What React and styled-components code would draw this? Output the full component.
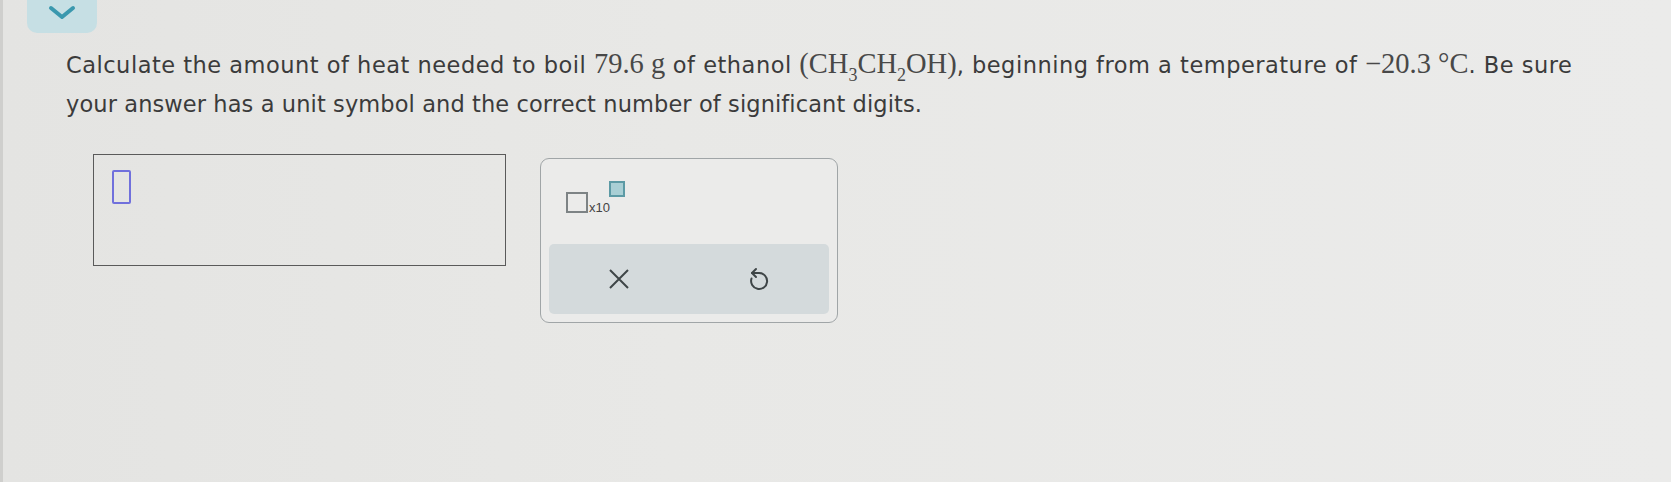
import React from "react";
import styled, { createGlobalStyle } from "styled-components";

const GlobalStyle = createGlobalStyle`
  html, body {
    margin: 0;
    padding: 0;
    background: #e7e7e5;
  }
  body {
    font-family: "DejaVu Sans", Verdana, sans-serif;
    color: #3b3b3b;
  }
`;

const Page = styled.div`
  width: 1671px;
  height: 482px;
  box-sizing: border-box;
  border-left: 3px solid #cfcfcd;
  background: linear-gradient(90deg, #e4e4e2 0%, #e8e8e6 40%, #ebebea 100%);
  overflow: hidden;
`;

const TabRow = styled.div`
  padding-left: 24px;
`;

const CollapseTab = styled.div`
  width: 70px;
  height: 33px;
  background: #c6dfe4;
  border-radius: 0 0 10px 10px;
  display: flex;
  align-items: flex-start;
  justify-content: center;
  padding-top: 5px;
  box-sizing: border-box;
`;

const Question = styled.div`
  margin: 11px 0 0 63px;
  font-size: 22.5px;
  line-height: 40px;
`;

const Line = styled.div`
  white-space: nowrap;
  height: 40px;
  letter-spacing: ${(p) => p.$spacing || 0}px;
`;

const Math = styled.span`
  font-family: "Liberation Serif", "Times New Roman", serif;
  font-size: 28.5px;
  letter-spacing: 0;
  color: #484848;
  sub {
    font-size: 18px;
    vertical-align: -8px;
    line-height: 0;
  }
`;

const AnswerRow = styled.div`
  display: flex;
  align-items: flex-start;
  gap: 34px;
  margin: 30px 0 0 90px;
`;

const AnswerBox = styled.div`
  width: 413px;
  height: 112px;
  box-sizing: border-box;
  border: 1.5px solid #5a5a5a;
  padding: 15px 0 0 18px;
`;

const Cursor = styled.div`
  width: 19px;
  height: 34px;
  box-sizing: border-box;
  border: 2px solid #7070dc;
  border-radius: 2px;
`;

const Keypad = styled.div`
  margin-top: 4px;
  width: 298px;
  height: 165px;
  box-sizing: border-box;
  border: 1.5px solid #a0a5a7;
  border-radius: 9px;
  background: #ebebea;
  padding: 22px 8px 8px 8px;
  display: flex;
  flex-direction: column;
`;

const SciRow = styled.div`
  display: flex;
  align-items: flex-end;
  height: 56px;
  padding: 0 0 0 17px;
  box-sizing: border-box;
  align-self: flex-start;
`;

const SciBase = styled.div`
  width: 22px;
  height: 21px;
  box-sizing: border-box;
  border: 2px solid #7d8385;
  margin-bottom: 24px;
`;

const SciTimes = styled.span`
  font-family: "Liberation Sans", Arial, sans-serif;
  font-size: 13px;
  color: #444;
  margin: 0 0 23px 1px;
  line-height: 13px;
`;

const SciExp = styled.div`
  width: 16px;
  height: 16px;
  box-sizing: border-box;
  border: 2px solid #5c9aa5;
  background: #a9cfd5;
  margin: 0 0 40px -1px;
`;

const ButtonBar = styled.div`
  margin-top: auto;
  height: 70px;
  background: #d4dadc;
  border-radius: 5px;
  display: grid;
  grid-template-columns: 1fr 1fr;
  align-items: center;
  justify-items: center;
`;

const IconButton = styled.button`
  border: none;
  background: none;
  padding: 0;
  width: 40px;
  height: 40px;
  display: flex;
  align-items: center;
  justify-content: center;
  color: #3e4547;
  cursor: pointer;
`;

function Chevron() {
  return (
    <svg width="28" height="16" viewBox="0 0 28 16">
      <path d="M3 3 L14 12 L25 3" fill="none" stroke="#3a98ae" strokeWidth="4" strokeLinecap="round" strokeLinejoin="round" />
    </svg>
  );
}

function ClearIcon() {
  return (
    <svg width="24" height="24" viewBox="0 0 24 24">
      <path d="M3 3 L21 21 M21 3 L3 21" stroke="currentColor" strokeWidth="2" fill="none" />
    </svg>
  );
}

function UndoIcon() {
  return (
    <svg width="24" height="26" viewBox="0 0 24 26">
      <path
        d="M5 7 H12 A8 8 0 1 1 4.5 12.5"
        fill="none"
        stroke="currentColor"
        strokeWidth="2"
        strokeLinecap="round"
      />
      <path d="M9 3 L5 7 L9 11" fill="none" stroke="currentColor" strokeWidth="2" strokeLinecap="round" strokeLinejoin="round" />
    </svg>
  );
}

export default function App() {
  return (
    <Page>
      <GlobalStyle />
      <TabRow>
        <CollapseTab>
          <Chevron />
        </CollapseTab>
      </TabRow>
      <Question>
        <Line $spacing={0.5}>
          Calculate the amount of heat needed to boil <Math>79.6 g</Math> of ethanol{" "}
          <Math>
            (CH<sub>3</sub>CH<sub>2</sub>OH)
          </Math>
          , beginning from a temperature of <Math>−20.3 °C</Math>. Be sure
        </Line>
        <Line $spacing={0.1}>your answer has a unit symbol and the correct number of significant digits.</Line>
      </Question>
      <AnswerRow>
        <AnswerBox>
          <Cursor />
        </AnswerBox>
        <Keypad>
          <SciRow>
            <SciBase />
            <SciTimes>x10</SciTimes>
            <SciExp />
          </SciRow>
          <ButtonBar>
            <IconButton aria-label="clear">
              <ClearIcon />
            </IconButton>
            <IconButton aria-label="undo">
              <UndoIcon />
            </IconButton>
          </ButtonBar>
        </Keypad>
      </AnswerRow>
    </Page>
  );
}
